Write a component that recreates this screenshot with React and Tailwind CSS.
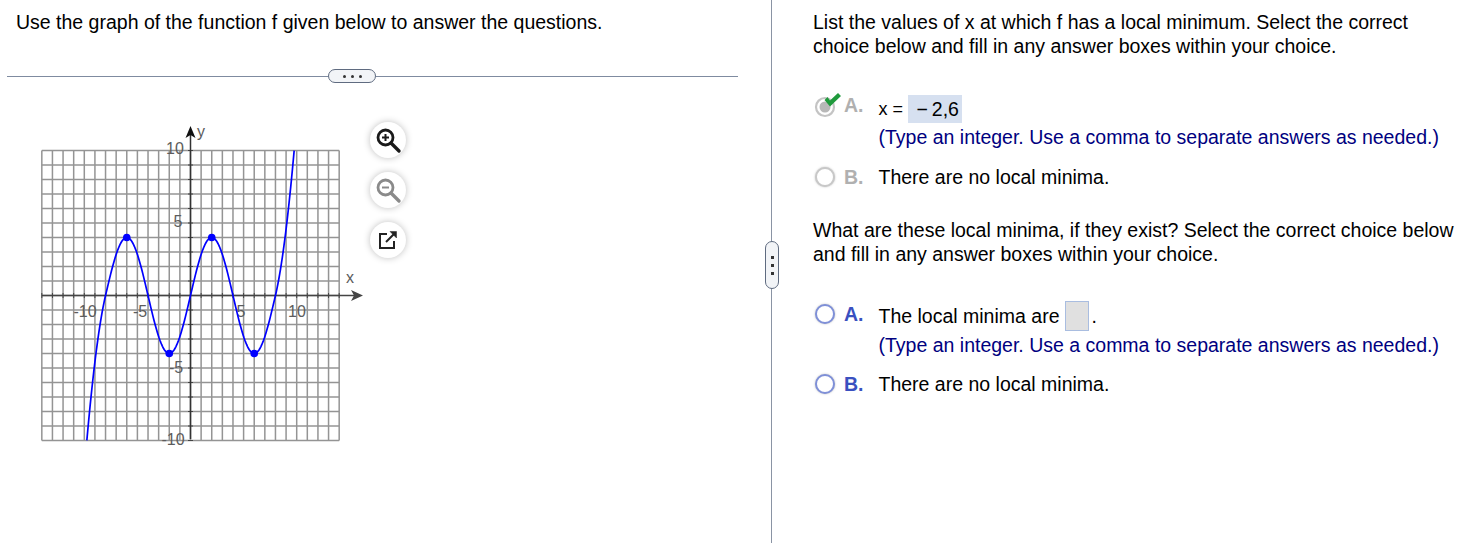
import React from 'react';

const X0 = 190.5;
const Y0 = 296.5;
const UX = 10.62;
const UY = 14.5;
const px = (x) => X0 + x * UX;
const py = (y) => Y0 - y * UY;

// sine through the extrema, then a parabola leaving the ends
const f = (x) => {
  if (x > 8) return Math.PI * (x - 8) + 1.44 * (x - 8) * (x - 8);
  if (x < -8) return Math.PI * (x + 8) - 1.44 * (x + 8) * (x + 8);
  return 4 * Math.sin((Math.PI * x) / 4);
};

const curve = () => {
  const pts = [];
  for (let i = -122; i <= 122; i++) {
    const x = i * 0.08;
    pts.push(`${px(x).toFixed(2)},${py(f(x)).toFixed(2)}`);
  }
  return pts.join(' ');
};

const range = (a, b) => Array.from({ length: b - a + 1 }, (_, i) => a + i);

const Graph = () => (
  <svg width="340" height="335" viewBox="30 115 340 335" className="shrink-0">
    {range(-14, 14).map((i) => (
      <line key={i} x1={px(i)} x2={px(i)} y1={py(10)} y2={py(-10)} stroke="#949494" strokeWidth="1.5" />
    ))}
    {range(-10, 10).map((i) => (
      <line key={i} x1={px(-14)} x2={px(14)} y1={py(i)} y2={py(i)} stroke="#949494" strokeWidth="1.5" />
    ))}
    {range(-14, 14).map((i) => (
      <line key={i} x1={px(i)} x2={px(i)} y1={Y0 - 2.5} y2={Y0 + 2.5} stroke="#444" strokeWidth="1" />
    ))}
    {range(-10, 10).map((i) => (
      <line key={i} x1={X0 - 2.5} x2={X0 + 2.5} y1={py(i)} y2={py(i)} stroke="#444" strokeWidth="1" />
    ))}
    <line x1="42" x2="358" y1={Y0} y2={Y0} stroke="#444" strokeWidth="1.5" />
    <line x1={X0} x2={X0} y1="132" y2="440" stroke="#333" strokeWidth="1.5" />
    <polygon points="363,296.5 351,291 354,296.5 351,302" fill="#444" />
    <polygon points="190.5,127 185.5,139 190.5,136 195.5,139" fill="#111" />
    <g fontFamily="'Liberation Sans', Arial, sans-serif" fontSize="16" fill="#5c5c5c" textAnchor="middle">
      <text x="201" y="138">y</text>
      <text x="350" y="284">x</text>
      <text x="175" y="155">10</text>
      <text x="178" y="228">5</text>
      <text x="176" y="374">-5</text>
      <text x="173" y="446">-10</text>
      <text x="85" y="318">-10</text>
      <text x="140" y="318">-5</text>
      <text x="241" y="318">5</text>
      <text x="297" y="318">10</text>
    </g>
    <polyline points={curve()} fill="none" stroke="#0000ff" strokeWidth="1.7" />
    {[[-6, 4], [-2, -4], [2, 4], [6, -4]].map(([x, y]) => (
      <circle key={x} cx={px(x)} cy={py(y)} r="3.8" fill="#0000ff" />
    ))}
  </svg>
);

const ToolButton = ({ children }) => (
  <div className="w-9 h-9 rounded-full bg-white shadow-[0_0_7px_rgba(0,0,0,0.25)] flex items-center justify-center">
    {children}
  </div>
);

const Magnifier = ({ color, plus }) => (
  <svg width="28" height="28" viewBox="0 0 28 28" fill="none" stroke={color}>
    <circle cx="11.5" cy="11.5" r="7.5" strokeWidth="2.8" />
    <line x1="17" y1="17" x2="25" y2="25" strokeWidth="3.4" strokeLinecap="round" />
    <line x1="8" y1="11.5" x2="15" y2="11.5" strokeWidth="2" />
    {plus && <line x1="11.5" y1="8" x2="11.5" y2="15" strokeWidth="2" />}
  </svg>
);

const Radio = ({ color }) => (
  <div className={`w-5 h-5 ml-[2px] rounded-full bg-white border-2 shrink-0 shadow-[0_0_2px_rgba(120,120,120,0.5)] ${color}`} />
);

const CheckedRadio = () => (
  <svg width="30" height="26" viewBox="0 0 30 26" className="shrink-0">
    <circle cx="13" cy="15" r="9" fill="#fff" stroke="#c4c4c4" strokeWidth="2.2" />
    <circle cx="13" cy="15" r="5.5" fill="#b8b8b8" />
    <path d="M12.5 8 L18 14.5 L29 4 L26 1 L18 8.5 L15.5 5 Z" fill="#1f9a3c" />
  </svg>
);

const note = 'text-[#000080]';

const App = () => {
  return (
    <div className="w-[1465px] h-[543px] flex overflow-hidden bg-white text-black text-[19.5px] leading-6 font-['Liberation_Sans',Arial,sans-serif]">
      <div className="w-[772px] shrink-0 border-r border-[#8a94a4] flex flex-col">
        <p className="pt-2.5 pl-4">Use the graph of the function f given below to answer the questions.</p>
        <div className="mt-[35px] ml-[7px] w-[731px] flex items-center">
          <div className="w-[321px] h-px bg-[#7f8ba0]" />
          <div className="w-12 h-3.5 rounded-full border border-[#5f6b80] bg-[#f2f4f7] flex items-center justify-center gap-[5px]">
            <span className="w-[3px] h-[3px] rounded-full bg-[#333]" />
            <span className="w-[3px] h-[3px] rounded-full bg-[#333]" />
            <span className="w-[3px] h-[3px] rounded-full bg-[#333]" />
          </div>
          <div className="flex-1 h-px bg-[#7f8ba0]" />
        </div>
        <div className="mt-[31px] pl-[30px] flex">
          <Graph />
          <div className="mt-[8px] flex flex-col gap-3.5">
            <ToolButton><Magnifier color="#1a1a1a" plus /></ToolButton>
            <ToolButton><Magnifier color="#8a8a8a" /></ToolButton>
            <ToolButton>
              <svg width="24" height="24" viewBox="0 0 24 24" fill="none" stroke="#222">
                <path d="M11 6 H4 V20 H18 V13" strokeWidth="2" />
                <path d="M10 14 L19 5" strokeWidth="2" />
                <path d="M14 3.5 H20.5 V10 Z" fill="#222" strokeWidth="0.5" />
              </svg>
            </ToolButton>
          </div>
        </div>
      </div>

      <div className="relative flex-1 pl-[41px] pt-2.5">
        <div className="absolute left-[-7px] top-[241px] w-3.5 h-12 rounded-full border border-[#5f6b80] bg-[#f2f4f7] flex flex-col items-center justify-center gap-[5px]">
          <span className="w-[3px] h-[3px] bg-[#333]" />
          <span className="w-[3px] h-[3px] bg-[#333]" />
          <span className="w-[3px] h-[3px] bg-[#333]" />
        </div>

        <p>List the values of x at which f has a local minimum. Select the correct<br />choice below and fill in any answer boxes within your choice.</p>

        <div className="mt-[37px] flex items-center h-7">
          <div className="w-[31px] -mt-2 -ml-[1px] mr-[1px]"><CheckedRadio /></div>
          <span className="w-[34.5px] font-bold text-[#b0b0b0] -mt-2">A.</span>
          <span className="text-[18px]">x =</span>
          <span className="ml-[4.5px] h-7 pl-[9px] pr-[2px] w-[54px] bg-[#d6e0f0] flex items-center whitespace-pre">−&#8201;2,6</span>
        </div>
        <p className={`mt-[2px] pl-[65.5px] ${note}`}>(Type an integer. Use a comma to separate answers as needed.)</p>
        <div className="mt-[16px] flex items-center">
          <div className="w-[31px]"><Radio color="border-[#c8c8c8]" /></div>
          <span className="w-[34.5px] font-bold text-[#b0b0b0]">B.</span>
          <span>There are no local minima.</span>
        </div>

        <p className="mt-[29px]">What are these local minima, if they exist? Select the correct choice below<br />and fill in any answer boxes within your choice.</p>

        <div className="mt-[35px] flex items-center h-[30px]">
          <div className="w-[31px] -mt-1"><Radio color="border-[#7f90d8]" /></div>
          <span className="w-[34.5px] font-bold text-[#3a50c0] -mt-1">A.</span>
          <span>The local minima are</span>
          <span className="ml-[6px] mr-[2px] w-6 h-[30px] bg-[#e0e0e0] border border-[#a9bde0]" />
          <span>.</span>
        </div>
        <p className={`mt-[2px] pl-[65.5px] ${note}`}>(Type an integer. Use a comma to separate answers as needed.)</p>
        <div className="mt-[15px] flex items-center">
          <div className="w-[31px]"><Radio color="border-[#7f90d8]" /></div>
          <span className="w-[34.5px] font-bold text-[#3a50c0]">B.</span>
          <span>There are no local minima.</span>
        </div>
      </div>
    </div>
  );
};

export default App;
